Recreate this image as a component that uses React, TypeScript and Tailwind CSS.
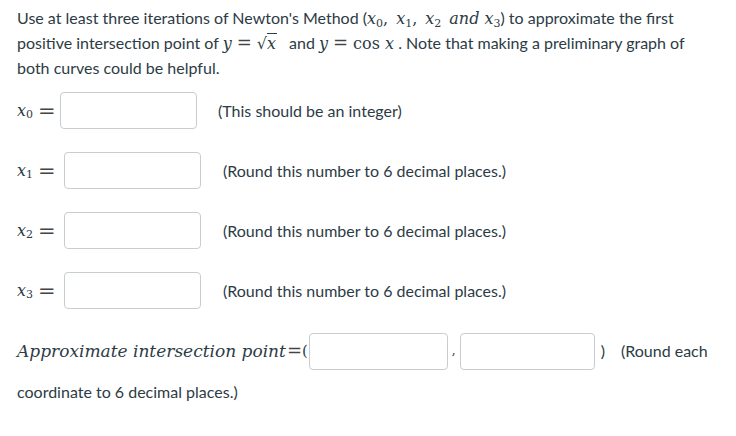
import React from 'react'

const math = { fontFamily: '"DejaVu Serif", "Liberation Serif", serif' }

function Sub({ n, size = 'text-[11px]' }: { n: number; size?: string }) {
  return <sub className={`not-italic ${size}`}>{n}</sub>
}

function Eq({ cls = 'mx-[6px]', size = 'text-[18px]' }: { cls?: string; size?: string }) {
  return <span style={math} className={`not-italic ${size} text-[#444] ${cls}`}>=</span>
}

function Box({ w = 'w-[137px]' }: { w?: string }) {
  return <input className={`${w} h-[37px] rounded-[4px] border border-[#c7cdd1] bg-white outline-none`} />
}

function Row({ n, label, note, noteGap }: { n: number; label: string; note: string; noteGap: string }) {
  return (
    <div className="flex items-center h-[37px]">
      <div className={`flex items-center ${label}`} style={math}>
        <span className="italic text-[16px]">
          x<Sub n={n} />
        </span>
        <Eq cls="ml-[5px]" size="text-[21px]" />
      </div>
      <Box />
      <span className={noteGap}>{note}</span>
    </div>
  )
}

export default function App() {
  return (
    <div
      className="px-[17px] pt-[6px] text-[16px] leading-6 text-[#2d3b45] bg-white min-h-screen"
      style={{ fontFamily: 'Lato, "Open Sans", sans-serif' }}
    >
      <p className="whitespace-nowrap">
        Use at least three iterations of Newton's Method (
        <span style={math} className="text-[16px]">
          <i>x</i><Sub n={0} />,{'\u2002'}
          <i>x</i><Sub n={1} />,{'\u2002'}
          <i>x</i><Sub n={2} />{'\u2002'}<i>and</i> <i>x</i><Sub n={3} />
        </span>
        ) to approximate the first
        <br />
        positive intersection point of{' '}
        <span style={math} className="text-[16px]">
          <i>y</i>
          <Eq cls="mx-[5px]" />
          √<span className="border-t border-[#2d3b45] italic pr-[1px]">x</span>
        </span>
        {'\u2003'}and{' '}
        <span style={math} className="text-[16px]">
          <i>y</i>
          <Eq cls="mx-[5px]" />
          cos <i>x</i>
        </span>{' '}
        . Note that making a preliminary graph of
        <br />
        both curves could be helpful.
      </p>

      <div className="mt-[12px] flex flex-col gap-[23px]">
        <Row n={0} label="w-[43px]" note="(This should be an integer)" noteGap="ml-[21px]" />
        <Row n={1} label="w-[47px]" note="(Round this number to 6 decimal places.)" noteGap="ml-[22px]" />
        <Row n={2} label="w-[47px]" note="(Round this number to 6 decimal places.)" noteGap="ml-[22px]" />
        <Row n={3} label="w-[47px]" note="(Round this number to 6 decimal places.)" noteGap="ml-[22px]" />
      </div>

      <div className="mt-[23px] flex items-center h-[38px] whitespace-nowrap">
        <span style={math} className="italic text-[17px]">
          Approximate intersection point
        </span>
        <Eq cls="ml-[1px]" />
        <span style={math} className="text-[15px] mr-[1px]">(</span>
        <Box w="w-[139px]" />
        <span style={math} className="mx-[4px] text-[12px] self-end mb-[8px]">,</span>
        <Box w="w-[135px]" />
        <span className="ml-[6px]">)</span>
        <span className="ml-[16px]">(Round each</span>
      </div>
      <p className="mt-[10px]">coordinate to 6 decimal places.)</p>
    </div>
  )
}
